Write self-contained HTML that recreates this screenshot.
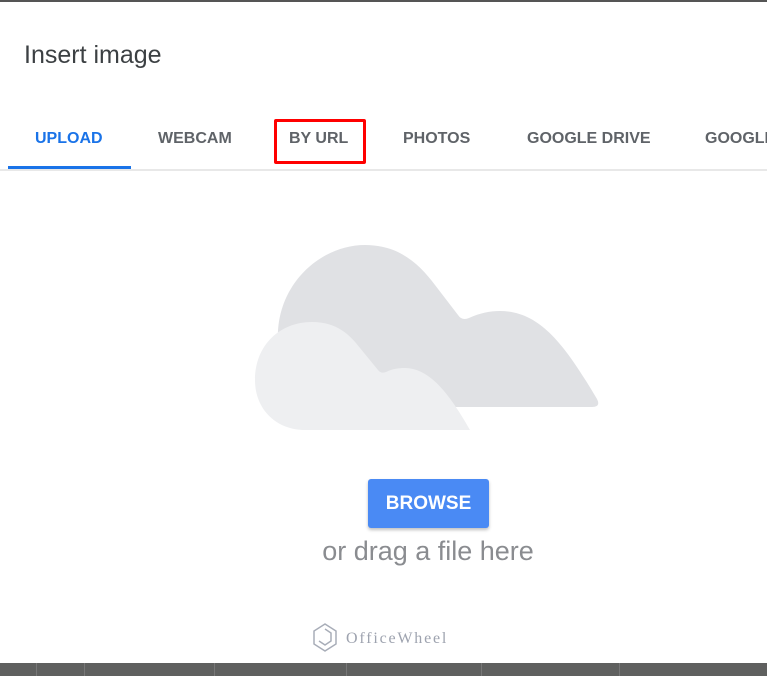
<!DOCTYPE html>
<html><head><style>
*{margin:0;padding:0;box-sizing:border-box}
body{width:767px;height:676px;background:#fff;position:relative;overflow:hidden;font-family:"Liberation Sans",sans-serif}
.t{position:absolute;top:130px;font-size:16px;font-weight:bold;color:#5f6368;white-space:nowrap;letter-spacing:0}
</style></head><body>
<div style="position:absolute;left:0;top:0;width:767px;height:2px;background:#555"></div>
<div style="position:absolute;left:24px;top:41px;font-size:25px;color:#3c4043">Insert image</div>
<div class="t" style="left:35px;color:#1a73e8">UPLOAD</div>
<div class="t" style="left:158px">WEBCAM</div>
<div class="t" style="left:289px">BY URL</div>
<div class="t" style="left:403px">PHOTOS</div>
<div class="t" style="left:527px">GOOGLE DRIVE</div>
<div class="t" style="left:705px">GOOGLE</div>
<div style="position:absolute;left:8px;top:166px;width:123px;height:3px;background:#1a73e8"></div>
<div style="position:absolute;left:0;top:169px;width:767px;height:2px;background:#e8e8e8"></div>
<div style="position:absolute;left:274px;top:119px;width:92px;height:45px;border:3px solid #f00;border-radius:2px"></div>
<svg style="position:absolute;left:0;top:0" width="767" height="676">
<path d="M278,340 C276,285 320,245 365,245 C400,245 420,265 435,285 L458,315 Q462,321 469,318 C480,313 490,311 500,311 C540,311 565,345 597,399 Q601,407 592,407 L300,407 Z" fill="#e0e1e4"/>
<path d="M255,380 C255,345 280,322 312,322 C337,322 350,335 360,348 L378,370 Q381,374 386,372 C392,369 398,368 405,368 C430,368 450,395 470,430 L305,430 C277,430 255,410 255,380 Z" fill="#eeeff1"/>
<g transform="translate(325,637)" fill="none" stroke="#a8adb8" stroke-width="1.5"><path d="M0,-13 L11,-6 L11,7 L0,14 L-11,7 L-11,-6 Z"/><path d="M0,-8 L6,-4 L6,4 L0,8 L-6,4"/></g>
<text x="346" y="643" font-family="Liberation Serif,serif" font-size="16" fill="#9ea3af" letter-spacing="1.8">OfficeWheel</text>
</svg>
<div style="position:absolute;left:368px;top:479px;width:121px;height:49px;background:#4a8af4;border-radius:3px;box-shadow:0 2px 3px rgba(0,0,0,.25);color:#fff;font-weight:bold;font-size:19px;text-align:center;line-height:50px">BROWSE</div>
<div style="position:absolute;left:178px;width:500px;top:536px;text-align:center;font-size:27px;color:#8a8c90">or drag a file here</div>
<div style="position:absolute;left:0;top:663px;width:767px;height:13px;background:#5f605f"></div>
<div style="position:absolute;left:36px;top:663px;width:1px;height:13px;background:#777"></div>
<div style="position:absolute;left:84px;top:663px;width:1px;height:13px;background:#777"></div>
<div style="position:absolute;left:214px;top:663px;width:1px;height:13px;background:#777"></div>
<div style="position:absolute;left:346px;top:663px;width:1px;height:13px;background:#777"></div>
<div style="position:absolute;left:481px;top:663px;width:1px;height:13px;background:#777"></div>
<div style="position:absolute;left:619px;top:663px;width:1px;height:13px;background:#777"></div>
</body></html>
